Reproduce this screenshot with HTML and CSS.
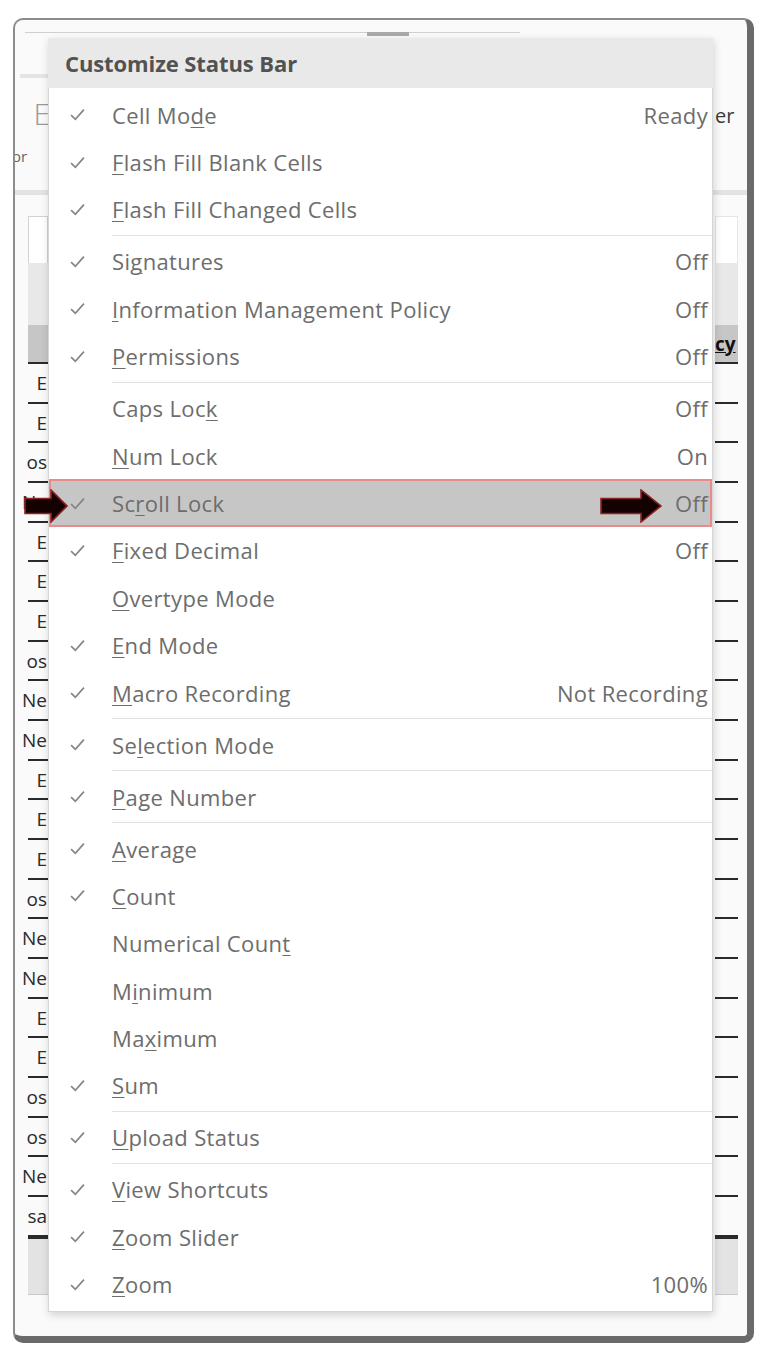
FILE: index.html
```html
<!DOCTYPE html>
<html lang="en">
  <head>
    <meta charset="UTF-8" />
    <meta name="viewport" content="width=device-width, initial-scale=1" />
    <title>Customize Status Bar</title>
    <link rel="stylesheet" href="styles.css">
  </head>
  <body>
    <div class="frame">
      <!-- spreadsheet behind the menu -->
      <div class="sheet">
        <div class="tabs">
          <div class="tabs-line"><span class="tab-active"></span></div>
        </div>
        <div class="ribbon">
          <div class="ribbon-left">
            <span class="ribbon-bar"></span>
            <span class="ribbon-e">E</span>
            <span class="ribbon-or">or</span>
          </div>
          <div class="ribbon-right"><span class="ribbon-er">er</span></div>
        </div>
        <div class="rule"></div>
        <div class="srow formula"><span class="cell"></span><span class="cell"></span></div>
        <div class="srow letters"><span class="cell"></span><span class="cell"></span></div>
        <div class="srow head"><span class="cell"></span><span class="cell">cy</span></div>
        <div class="srow"><span class="cell">E</span><span class="cell"></span></div>
        <div class="srow"><span class="cell">E</span><span class="cell"></span></div>
        <div class="srow"><span class="cell">os</span><span class="cell"></span></div>
        <div class="srow"><span class="cell">Ne</span><span class="cell"></span></div>
        <div class="srow"><span class="cell">E</span><span class="cell"></span></div>
        <div class="srow"><span class="cell">E</span><span class="cell"></span></div>
        <div class="srow"><span class="cell">E</span><span class="cell"></span></div>
        <div class="srow"><span class="cell">os</span><span class="cell"></span></div>
        <div class="srow"><span class="cell">Ne</span><span class="cell"></span></div>
        <div class="srow"><span class="cell">Ne</span><span class="cell"></span></div>
        <div class="srow"><span class="cell">E</span><span class="cell"></span></div>
        <div class="srow"><span class="cell">E</span><span class="cell"></span></div>
        <div class="srow"><span class="cell">E</span><span class="cell"></span></div>
        <div class="srow"><span class="cell">os</span><span class="cell"></span></div>
        <div class="srow"><span class="cell">Ne</span><span class="cell"></span></div>
        <div class="srow"><span class="cell">Ne</span><span class="cell"></span></div>
        <div class="srow"><span class="cell">E</span><span class="cell"></span></div>
        <div class="srow"><span class="cell">E</span><span class="cell"></span></div>
        <div class="srow"><span class="cell">os</span><span class="cell"></span></div>
        <div class="srow"><span class="cell">os</span><span class="cell"></span></div>
        <div class="srow"><span class="cell">Ne</span><span class="cell"></span></div>
        <div class="srow"><span class="cell">sa</span><span class="cell"></span></div>
        <div class="srow total"><span class="cell"></span><span class="cell"></span></div>
      </div>

      <!-- context menu -->
      <div class="menu">
        <div class="menu-title">Customize Status Bar</div>

        <div class="item"><span class="check"><svg viewBox="0 0 14 12"><path d="M1 6.5 5 10.5 13 1.5" /></svg></span><span class="label">Cell Mo<u>d</u>e</span><span class="value">Ready</span></div>
        <div class="item"><span class="check"><svg viewBox="0 0 14 12"><path d="M1 6.5 5 10.5 13 1.5" /></svg></span><span class="label"><u>F</u>lash Fill Blank Cells</span></div>
        <div class="item"><span class="check"><svg viewBox="0 0 14 12"><path d="M1 6.5 5 10.5 13 1.5" /></svg></span><span class="label"><u>F</u>lash Fill Changed Cells</span></div>
        <div class="sep"></div>
        <div class="item"><span class="check"><svg viewBox="0 0 14 12"><path d="M1 6.5 5 10.5 13 1.5" /></svg></span><span class="label">Si<u>g</u>natures</span><span class="value">Off</span></div>
        <div class="item"><span class="check"><svg viewBox="0 0 14 12"><path d="M1 6.5 5 10.5 13 1.5" /></svg></span><span class="label"><u>I</u>nformation Management Policy</span><span class="value">Off</span></div>
        <div class="item"><span class="check"><svg viewBox="0 0 14 12"><path d="M1 6.5 5 10.5 13 1.5" /></svg></span><span class="label"><u>P</u>ermissions</span><span class="value">Off</span></div>
        <div class="sep"></div>
        <div class="item"><span class="check"></span><span class="label">Caps Loc<u>k</u></span><span class="value">Off</span></div>
        <div class="item"><span class="check"></span><span class="label"><u>N</u>um Lock</span><span class="value">On</span></div>
        <div class="item hot"><span class="check"><svg viewBox="0 0 14 12"><path d="M1 6.5 5 10.5 13 1.5" /></svg></span><span class="label">Sc<u>r</u>oll Lock</span><span class="value">Off</span></div>
        <div class="item"><span class="check"><svg viewBox="0 0 14 12"><path d="M1 6.5 5 10.5 13 1.5" /></svg></span><span class="label"><u>F</u>ixed Decimal</span><span class="value">Off</span></div>
        <div class="item"><span class="check"></span><span class="label"><u>O</u>vertype Mode</span></div>
        <div class="item"><span class="check"><svg viewBox="0 0 14 12"><path d="M1 6.5 5 10.5 13 1.5" /></svg></span><span class="label"><u>E</u>nd Mode</span></div>
        <div class="item"><span class="check"><svg viewBox="0 0 14 12"><path d="M1 6.5 5 10.5 13 1.5" /></svg></span><span class="label"><u>M</u>acro Recording</span><span class="value">Not Recording</span></div>
        <div class="sep"></div>
        <div class="item"><span class="check"><svg viewBox="0 0 14 12"><path d="M1 6.5 5 10.5 13 1.5" /></svg></span><span class="label">Se<u>l</u>ection Mode</span></div>
        <div class="sep"></div>
        <div class="item"><span class="check"><svg viewBox="0 0 14 12"><path d="M1 6.5 5 10.5 13 1.5" /></svg></span><span class="label"><u>P</u>age Number</span></div>
        <div class="sep"></div>
        <div class="item"><span class="check"><svg viewBox="0 0 14 12"><path d="M1 6.5 5 10.5 13 1.5" /></svg></span><span class="label"><u>A</u>verage</span></div>
        <div class="item"><span class="check"><svg viewBox="0 0 14 12"><path d="M1 6.5 5 10.5 13 1.5" /></svg></span><span class="label"><u>C</u>ount</span></div>
        <div class="item"><span class="check"></span><span class="label">Numerical Coun<u>t</u></span></div>
        <div class="item"><span class="check"></span><span class="label">M<u>i</u>nimum</span></div>
        <div class="item"><span class="check"></span><span class="label">Ma<u>x</u>imum</span></div>
        <div class="item"><span class="check"><svg viewBox="0 0 14 12"><path d="M1 6.5 5 10.5 13 1.5" /></svg></span><span class="label"><u>S</u>um</span></div>
        <div class="sep"></div>
        <div class="item"><span class="check"><svg viewBox="0 0 14 12"><path d="M1 6.5 5 10.5 13 1.5" /></svg></span><span class="label"><u>U</u>pload Status</span></div>
        <div class="sep"></div>
        <div class="item"><span class="check"><svg viewBox="0 0 14 12"><path d="M1 6.5 5 10.5 13 1.5" /></svg></span><span class="label"><u>V</u>iew Shortcuts</span></div>
        <div class="item"><span class="check"><svg viewBox="0 0 14 12"><path d="M1 6.5 5 10.5 13 1.5" /></svg></span><span class="label"><u>Z</u>oom Slider</span></div>
        <div class="item"><span class="check"><svg viewBox="0 0 14 12"><path d="M1 6.5 5 10.5 13 1.5" /></svg></span><span class="label"><u>Z</u>oom</span><span class="value">100%</span></div>
      </div>

      <!-- annotation arrows -->
      <svg class="arrow arrow-left" viewBox="0 0 44 34"><polygon points="1,9.5 27,9.5 27,1 43,17 27,33 27,24.5 1,24.5" /></svg>
      <svg class="arrow arrow-right" viewBox="0 0 62 34"><polygon points="1,9.5 41,9.5 41,1 61,17 41,33 41,24.5 1,24.5" /></svg>
    </div>
  </body>
</html>
```

FILE: styles.css
```css
:root {
  --menu-text: #6d6d6d;
  --sheet-line: #2a2a2a;
  --row-h: 47.4px;
}
* {
  box-sizing: border-box;
}
html,
body {
  margin: 0;
  padding: 0;
  background: #ffffff;
  font-family: 'Open Sans', 'Noto Sans', sans-serif;
}

/* outer screenshot frame */
.frame {
  position: relative;
  width: 741px;
  height: 1325px;
  margin: 18px 0 0 13px;
  border: 2px solid #8c8c8c;
  border-right: 7px solid #6a6a6a;
  border-bottom: 7px solid #6a6a6a;
  border-radius: 10px;
  background: #fafafa;
  overflow: hidden;
}

/* spreadsheet peeking out at the sides */
.sheet {
  display: flex;
  flex-direction: column;
}
.tabs {
  height: 18px;
  padding: 12px 0 0 10px;
}
.tabs-line {
  width: 495px;
  height: 1px;
  background: #cfcfcf;
}
.tab-active {
  display: block;
  width: 42px;
  height: 4px;
  margin-left: 342px;
  background: #a9a9a9;
}
.ribbon {
  height: 152px;
  display: flex;
  justify-content: space-between;
}
.ribbon-left {
  width: 33px;
  display: flex;
  flex-direction: column;
  align-items: flex-end;
}
.ribbon-bar {
  width: 28px;
  height: 4px;
  margin-top: 36px;
  background: #e4e4e4;
}
.ribbon-e {
  margin-top: 18px;
  margin-right: -2px;
  font-size: 30px;
  line-height: 36px;
  font-weight: 300;
  color: #9a9a9a;
}
.ribbon-or {
  align-self: flex-start;
  margin-top: 14px;
  margin-left: -3px;
  font-size: 15px;
  line-height: 20px;
  color: #666;
}
.ribbon-right {
  width: 34px;
  padding-top: 64px;
}
.ribbon-er {
  display: block;
  margin-left: 2px;
  font-size: 20px;
  line-height: 28px;
  color: #3c3c3c;
}
.rule {
  height: 5px;
  background: #e3e3e3;
}

.srow {
  display: grid;
  grid-template-columns: 13px 20px 1fr 23px 9px;
  height: 39.68px;
}
.srow .cell {
  grid-row: 1;
  display: flex;
  align-items: center;
  justify-content: flex-end;
  white-space: nowrap;
  border-bottom: 2px solid var(--sheet-line);
  font-size: 19px;
  color: #2a2a2a;
}
.srow .cell:first-child {
  grid-column: 2;
  padding-right: 1px;
}
.srow .cell:last-child {
  grid-column: 4;
  justify-content: flex-start;
}
.srow.formula {
  height: 68px;
  padding-top: 21px;
}
.srow.formula .cell {
  background: #ffffff;
  border: 1px solid #d2d2d2;
  border-bottom: 0;
}
.srow.formula .cell:last-child {
  border-color: #e6e6e6;
}
.srow.letters {
  height: 62px;
}
.srow.letters .cell {
  border-bottom: 0;
  background: #e8e8e8;
}
.srow.head {
  height: 39px;
}
.srow.head .cell {
  background: #c6c6c6;
  font-weight: 700;
  color: #111;
  text-decoration: underline;
}
.srow.total {
  height: 58px;
}
.srow.total .cell {
  background: #e3e3e3;
  border-top: 2px solid var(--sheet-line);
  border-bottom: 1px solid #c9c9c9;
}

/* the menu itself */
.menu {
  position: absolute;
  left: 33px;
  top: 18px;
  width: 665px;
  padding-bottom: 3px;
  background: #ffffff;
  border: 1px solid #d6d6d6;
  box-shadow: 1px 3px 8px rgba(0, 0, 0, 0.16);
}
.menu-title {
  height: 50px;
  margin: -1px -1px 3px;
  padding-left: 17px;
  display: flex;
  align-items: center;
  background: #e9e9e9;
  font-size: 22px;
  font-weight: 700;
  letter-spacing: -0.1px;
  color: #525252;
}
.item {
  height: var(--row-h);
  display: flex;
  align-items: center;
  padding: 0 4px 0 21px;
  font-size: 22px;
  letter-spacing: 0.35px;
  color: var(--menu-text);
}
.check {
  width: 42px;
  flex: none;
  display: flex;
  align-items: center;
}
.check svg {
  width: 15px;
  height: 13px;
  fill: none;
  stroke: #858585;
  stroke-width: 1.6;
}
.label u {
  text-underline-offset: 3px;
  text-decoration-thickness: 1px;
}
.value {
  margin-left: auto;
}
.sep {
  height: 1px;
  margin: 1.8px 0 1.8px 63px;
  background: #e2e2e2;
}
.item.hot {
  background: #c6c6c6;
  border: 2px solid #ea8a8a;
  padding-left: 19px;
  padding-right: 2px;
}

/* red-black pointer arrows */
.arrow {
  position: absolute;
  top: 469px;
  height: 34px;
  fill: #140202;
  stroke: #8e2323;
  stroke-width: 1.6;
}
.arrow-left {
  left: 9px;
  width: 44px;
}
.arrow-right {
  left: 585px;
  width: 62px;
}
```
